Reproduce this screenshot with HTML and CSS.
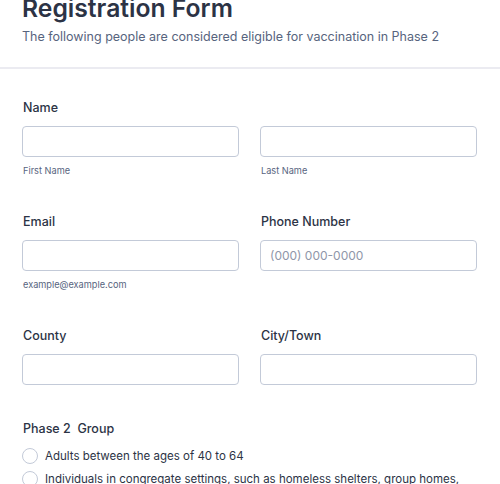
FILE: index.html
```html
<!DOCTYPE html>
<html lang="en">
<head>
    <meta charset="UTF-8">
    <title>Registration Form</title>
    <link rel="stylesheet" href="styles.css">
</head>
<body>
<div class="form-header">
    <h1 class="form-title">Registration Form</h1>
    <p class="form-subtitle">The following people are considered eligible for vaccination in Phase 2</p>
</div>
<form class="form-body">
    <div class="field">
        <label class="field-label" for="first-name">Name</label>
        <div class="row">
            <div class="col">
                <input type="text" class="input-box" id="first-name">
                <span class="sub-label">First Name</span>
            </div>
            <div class="col">
                <input type="text" class="input-box" id="last-name">
                <span class="sub-label">Last Name</span>
            </div>
        </div>
    </div>
    <div class="row">
        <div class="field col">
            <label class="field-label" for="email">Email</label>
            <input type="email" class="input-box" id="email">
            <span class="sub-label">example@example.com</span>
        </div>
        <div class="field col">
            <label class="field-label" for="phone">Phone Number</label>
            <input type="tel" class="input-box" id="phone" placeholder="(000) 000-0000">
        </div>
    </div>
    <div class="row">
        <div class="field col">
            <label class="field-label" for="county">County</label>
            <input type="text" class="input-box" id="county">
        </div>
        <div class="field col">
            <label class="field-label" for="city">City/Town</label>
            <input type="text" class="input-box" id="city">
        </div>
    </div>
    <div class="field">
        <span class="field-label group-label">Phase 2&nbsp; Group</span>
        <label class="radio-item">
            <input type="radio" name="group">
            <span class="radio-circle"></span>
            Adults between the ages of 40 to 64
        </label>
        <label class="radio-item">
            <input type="radio" name="group">
            <span class="radio-circle"></span>
            Individuals in congregate settings, such as homeless shelters, group homes,
        </label>
    </div>
</form>
</body>
</html>
```

FILE: styles.css
```css
body {
    margin: 0;
    font-family: Inter, "Noto Sans", sans-serif;
    color: #2c3345;
    background-color: #fff;
    overflow: hidden;
}

.form-header {
    margin-top: -8px;
    padding: 0 22px 21px;
    border-bottom: 2px solid #ebebf1;
}

.form-title {
    margin: 0;
    font-size: 24.7px;
    line-height: 32px;
    font-weight: 600;
    color: #2c3345;
}

.form-subtitle {
    margin: 4px 0 0;
    font-size: 12.5px;
    line-height: 18px;
    color: #57647e;
}

.form-body {
    padding: 29px 22px 0 23px;
}

.row {
    display: flex;
    gap: 21px;
}

.col {
    flex: 1;
    display: flex;
    flex-direction: column;
    min-width: 0;
}

.field {
    margin-bottom: 34px;
}

.field-label {
    display: block;
    font-size: 12.5px;
    line-height: 20px;
    font-weight: 500;
    margin-bottom: 8px;
}

.group-label {
    margin-bottom: 5px;
}

.input-box {
    box-sizing: border-box;
    width: 100%;
    height: 31px;
    margin: 0 0 0 -1px;
    padding: 0 9px;
    border: 1px solid #c3cad8;
    border-radius: 4px;
    font-family: inherit;
    font-size: 12px;
    color: #2c3345;
    background-color: #fff;
}

.input-box::placeholder {
    color: #8f96a9;
}

.sub-label {
    display: block;
    margin-top: 7px;
    font-size: 9.2px;
    line-height: 14px;
    color: #57647e;
}

.radio-item {
    display: flex;
    align-items: center;
    gap: 7px;
    height: 23px;
    margin-left: -1px;
    font-size: 11.5px;
    color: #2c3345;
    white-space: nowrap;
}

.radio-item input {
    display: none;
}

.radio-circle {
    box-sizing: border-box;
    flex: none;
    width: 16px;
    height: 16px;
    border: 1px solid #c3cad8;
    border-radius: 50%;
}
```
